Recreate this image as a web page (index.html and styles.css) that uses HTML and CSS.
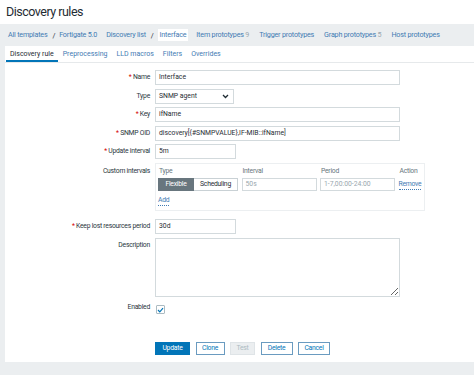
FILE: index.html
```html
<!DOCTYPE html>
<html lang="en">
<head>
<meta charset="utf-8">
<title>Discovery rules</title>
<link rel="stylesheet" href="styles.css">
</head>
<body>
<div class="page">
  <header class="header"><h1 class="title">Discovery rules</h1></header>
  <nav class="crumbs">
    <div class="crumb-group">
      <a class="crumb">All templates</a><span class="sep">/</span><a class="crumb">Fortigate 5.0</a>
    </div>
    <div class="crumb-group">
      <a class="crumb">Discovery list</a><span class="sep">/</span><span class="crumb current">Interface</span>
    </div>
    <a class="crumb">Item prototypes <span class="count">9</span></a>
    <a class="crumb">Trigger prototypes</a>
    <a class="crumb">Graph prototypes <span class="count">5</span></a>
    <a class="crumb">Host prototypes</a>
  </nav>
  <main class="panel">
    <div class="tabs">
      <span class="tab active">Discovery rule</span>
      <span class="tab">Preprocessing</span>
      <span class="tab">LLD macros</span>
      <span class="tab">Filters</span>
      <span class="tab">Overrides</span>
    </div>
    <form class="form">
      <label class="label"><span class="req">*</span> Name</label>
      <div class="field"><div class="input wide">Interface</div></div>

      <label class="label">Type</label>
      <div class="field">
        <div class="input select">SNMP agent
          <svg class="chev" width="7" height="5" viewBox="0 0 7 5"><path d="M1 1 L3.5 3.5 L6 1" fill="none" stroke="#1f2c33" stroke-width="1.3"/></svg>
        </div>
      </div>

      <label class="label"><span class="req">*</span> Key</label>
      <div class="field"><div class="input wide">ifName</div></div>

      <label class="label"><span class="req">*</span> SNMP OID</label>
      <div class="field"><div class="input wide">discovery[{#SNMPVALUE},IF-MIB::ifName]</div></div>

      <label class="label"><span class="req">*</span> Update interval</label>
      <div class="field"><div class="input short">5m</div></div>

      <label class="label top">Custom intervals</label>
      <div class="field">
        <div class="ci">
          <div class="ci-grid">
            <span class="ci-head">Type</span>
            <span class="ci-head">Interval</span>
            <span class="ci-head">Period</span>
            <span class="ci-head">Action</span>
            <div class="seg"><span class="seg-btn on">Flexible</span><span class="seg-btn">Scheduling</span></div>
            <div class="input ci-input placeholder">50s</div>
            <div class="input ci-input placeholder">1-7,00:00-24:00</div>
            <a class="link">Remove</a>
          </div>
          <a class="link add">Add</a>
        </div>
      </div>

      <label class="label"><span class="req">*</span> Keep lost resources period</label>
      <div class="field"><div class="input short">30d</div></div>

      <label class="label">Description</label>
      <div class="field"><textarea class="textarea"></textarea></div>

      <label class="label">Enabled</label>
      <div class="field check-field">
        <span class="checkbox">
          <svg width="7" height="6" viewBox="0 0 7 6"><path d="M1 3 L2.8 4.8 L6 1.2" fill="none" stroke="#0275b8" stroke-width="1.2"/></svg>
        </span>
      </div>

      <div class="buttons">
        <span class="btn primary">Update</span>
        <span class="btn clone">Clone</span>
        <span class="btn disabled">Test</span>
        <span class="btn delete">Delete</span>
        <span class="btn cancel">Cancel</span>
      </div>
    </form>
  </main>
</div>
</body>
</html>
```

FILE: styles.css
```css
* { box-sizing: border-box; }
html, body {
  margin: 0;
  padding: 0;
}
body {
  background: #ebeef0;
  font-family: Roboto, "Liberation Sans", Arial, sans-serif;
  font-size: 6.8px;
  letter-spacing: -0.25px;
  color: #1f2c33;
  width: 474px;
  height: 375px;
  overflow: hidden;
}
.page {
  display: flex;
  flex-direction: column;
}
.header {
  background: #ffffff;
  height: 24px;
  padding: 3px 0 0 6px;
}
.title {
  margin: 0;
  font-size: 12.5px;
  font-weight: normal;
  line-height: 17px;
  letter-spacing: -0.5px;
  color: #1f2c33;
}
.crumbs {
  height: 22px;
  display: flex;
  align-items: center;
  padding-left: 8px;
  background: #ebeef0;
  font-size: 7.2px;
  letter-spacing: -0.2px;
}
.crumb-group {
  display: flex;
  align-items: center;
}
.crumb {
  color: #3f7bb3;
  line-height: 12px;
  white-space: nowrap;
}
.crumbs > .crumb-group:nth-child(2) { margin-left: 9px; }
.crumbs > a.crumb { margin-left: 8px; }
.crumbs > a.crumb + a.crumb { margin-left: 10px; }
.crumb.current {
  background: #ffffff;
  color: #3f7bb3;
  padding: 0 2px;
}
.sep {
  color: #1f2c33;
  margin: 0 4px 0 5px;
}
.count { color: #9aa7ae; }
.panel {
  margin-left: 5px;
  background: #ffffff;
  height: 316px;
}
.tabs {
  height: 17px;
  display: flex;
  align-items: stretch;
  border-bottom: 1px solid #e6e9eb;
  padding-left: 1px;
  font-size: 7px;
  letter-spacing: 0;
}
.tab {
  color: #3f7bb3;
  padding: 3px 4px 0 4px;
  margin-right: 1px;
  line-height: 11px;
  border-bottom: 2px solid transparent;
}
.tab.active {
  color: #1f2c33;
  border-bottom-color: #0275b8;
}
.form {
  display: grid;
  grid-template-columns: 145px 1fr;
  column-gap: 5px;
  row-gap: 3.5px;
  padding-top: 7px;
}
.label {
  text-align: right;
  line-height: 15px;
  white-space: nowrap;
  color: #2a363d;
}
.label.top { padding-top: 1px; }
.req { color: #d40000; }
.field { display: flex; align-items: flex-start; }
.input {
  height: 15px;
  border: 1px solid #d3dadd;
  background: #ffffff;
  padding: 0 3px;
  line-height: 13px;
  white-space: nowrap;
  overflow: hidden;
  letter-spacing: 0;
}
.wide { width: 245px; }
.short { width: 81px; }
.select {
  width: 79px;
  display: flex;
  align-items: center;
  justify-content: space-between;
  padding-right: 4px;
}
.chev { flex: none; }
.placeholder { color: #9aa7ae; }
.ci {
  width: 270px;
  border: 1px solid #eceff1;
  padding: 2px 3px 4px 2px;
  margin-bottom: 4.5px;
}
.ci-grid {
  display: grid;
  grid-template-columns: 80px 75px 75px auto;
  column-gap: 3.5px;
  row-gap: 1.5px;
}
.ci-head {
  line-height: 11px;
  color: #68767e;
  padding-left: 1px;
}
.seg {
  display: flex;
  height: 13px;
}
.seg-btn {
  border: 1px solid #c9d1d5;
  line-height: 11px;
  padding: 0;
  background: #ffffff;
  color: #1f2c33;
  text-align: center;
}
.seg-btn.on {
  background: #68767e;
  border-color: #68767e;
  color: #ffffff;
  width: 36px;
}
.seg-btn:last-child { flex: 1; border-left: none; }
.ci-input {
  height: 13px;
  line-height: 11px;
}
.link {
  color: #3f7bb3;
  border-bottom: 1px dotted #3f7bb3;
  line-height: 10px;
  align-self: center;
  justify-self: start;
}
.add {
  display: inline-block;
  margin: 4px 0 0 0;
}
.textarea {
  width: 245px;
  height: 59px;
  border: 1px solid #d3dadd;
  margin: 0;
  padding: 2px;
  font: inherit;
  display: block;
}
.check-field { align-items: center; margin-top: 2px; height: 15px; }
.checkbox {
  width: 9px;
  height: 9px;
  border: 1px solid #acbbc2;
  border-radius: 1px;
  margin-left: 1px;
  display: flex;
  align-items: center;
  justify-content: center;
}
.buttons {
  grid-column: 2;
  display: flex;
  gap: 5.5px;
  margin-top: 21.5px;
}
.btn {
  height: 13px;
  line-height: 11px;
  padding: 0;
  border: 1px solid #6a9bc0;
  color: #0275b8;
  background: #ffffff;
  text-align: center;
}
.btn.primary {
  background: #0275b8;
  border-color: #0275b8;
  color: #ffffff;
  width: 35px;
}
.btn.clone { width: 29px; }
.btn.disabled {
  background: #ebeef0;
  border-color: #dfe4e7;
  color: #acbbc2;
  width: 25px;
}
.btn.delete { width: 32px; }
.btn.cancel { width: 32px; }
```
